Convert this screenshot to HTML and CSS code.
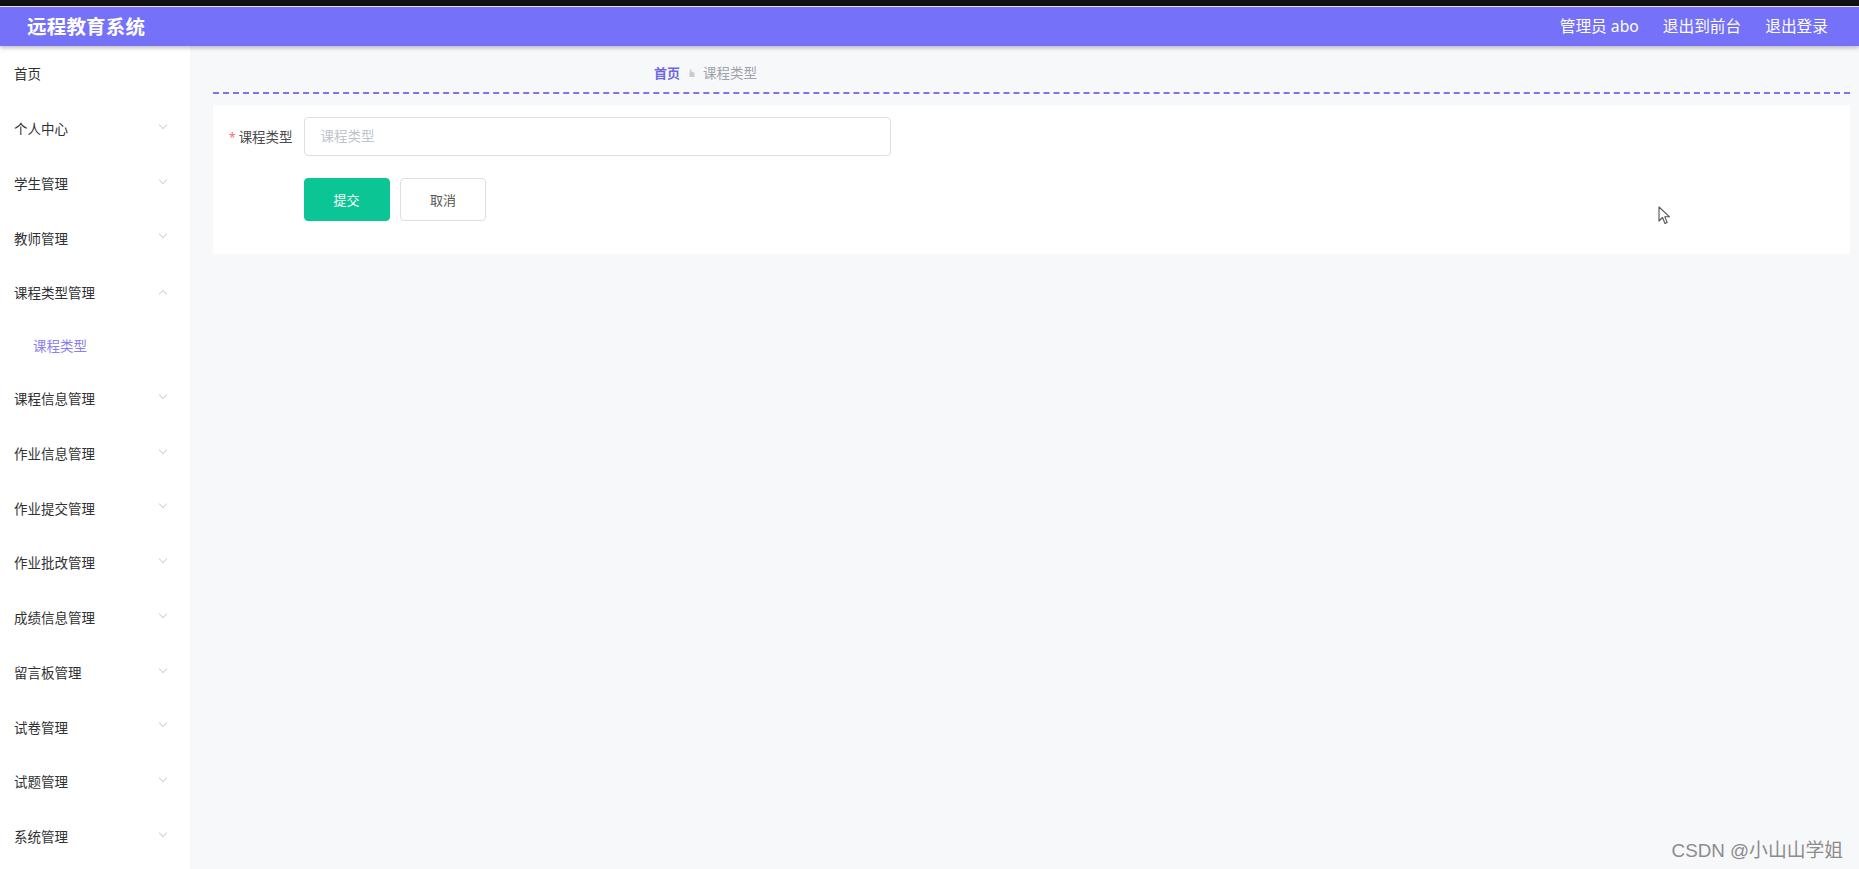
FILE: index.html
```html
<!DOCTYPE html>
<html lang="zh-CN">
<head>
    <meta charset="UTF-8">
    <meta name="viewport" content="width=device-width, initial-scale=1.0">
    <title>远程教育系统</title>
    <link rel="stylesheet" href="styles.css">
</head>
<body>
    <div class="topbar"></div>
    <div class="header">
        <div class="logo">远程教育系统</div>
        <div class="header-right">
            <span>管理员 abo</span>
            <span>退出到前台</span>
            <span>退出登录</span>
        </div>
    </div>

    <div class="layout">
        <div class="sidebar">
            <div class="menu-item">首页</div>
            <div class="menu-item">个人中心<span class="arrow"></span></div>
            <div class="menu-item">学生管理<span class="arrow"></span></div>
            <div class="menu-item">教师管理<span class="arrow"></span></div>
            <div class="menu-item">课程类型管理<span class="arrow up"></span></div>
            <div class="menu-item sub active">课程类型</div>
            <div class="menu-item">课程信息管理<span class="arrow"></span></div>
            <div class="menu-item">作业信息管理<span class="arrow"></span></div>
            <div class="menu-item">作业提交管理<span class="arrow"></span></div>
            <div class="menu-item">作业批改管理<span class="arrow"></span></div>
            <div class="menu-item">成绩信息管理<span class="arrow"></span></div>
            <div class="menu-item">留言板管理<span class="arrow"></span></div>
            <div class="menu-item">试卷管理<span class="arrow"></span></div>
            <div class="menu-item">试题管理<span class="arrow"></span></div>
            <div class="menu-item">系统管理<span class="arrow"></span></div>
        </div>

        <div class="main">
            <div class="breadcrumb">
                <span class="crumb-home">首页</span>
                <svg class="crumb-sep" width="8" height="10" viewBox="0 0 8 10">
                    <path d="M2 1.5 L3.5 1.5 L3.5 4 L6.5 4.5 L6.5 9 L1.5 9 L1.5 5 Z" fill="#c8cad0"/>
                </svg>
                <span class="crumb-current">课程类型</span>
            </div>

            <div class="card">
                <div class="form-item">
                    <label class="form-label"><span class="required">*</span>课程类型</label>
                    <input class="form-input" type="text" placeholder="课程类型">
                </div>
                <div class="form-actions">
                    <button class="btn btn-primary">提交</button>
                    <button class="btn btn-default">取消</button>
                </div>
            </div>
        </div>
    </div>

    <svg class="cursor" width="13" height="20" viewBox="0 0 13 20">
        <path d="M1 1 L1 15 L4.5 11.5 L7 17.5 L9.2 16.6 L6.8 10.8 L11.5 10.8 Z" fill="#fff" stroke="#555" stroke-width="1.1" stroke-linejoin="round"/>
    </svg>

    <div class="watermark">CSDN @小山山学姐</div>
</body>
</html>
```

FILE: styles.css
```css
html, body {
    margin: 0;
    padding: 0;
    height: 100%;
    overflow: hidden;
}
body {
    background-color: #f7f8fa;
    color: #303133;
    font-family: "Noto Sans", "Noto Sans CJK SC", sans-serif;
    position: relative;
}
.topbar {
    height: 6px;
    background-color: #111;
    border-bottom: 1px solid #e8e8ee;
}
.header {
    height: 39px;
    background-color: #7571f9;
    display: flex;
    align-items: center;
    justify-content: space-between;
    padding: 0 31px 0 27px;
    box-shadow: 0 2px 4px rgba(0, 0, 0, 0.25);
    position: relative;
    z-index: 2;
}
.logo {
    color: #fff;
    font-size: 19.5px;
    font-weight: bold;
    line-height: 1;
    letter-spacing: 0.2px;
}
.header-right {
    display: flex;
    gap: 24px;
    color: #fff;
    font-size: 15.7px;
    line-height: 1;
}
.layout {
    display: flex;
    height: calc(100% - 46px);
}
.sidebar {
    width: 190px;
    flex-shrink: 0;
    background-color: #fff;
}
.menu-item {
    height: 54.75px;
    display: flex;
    align-items: center;
    padding-left: 14px;
    font-size: 13.5px;
    color: #303133;
    position: relative;
}
.menu-item.sub {
    height: 51px;
    padding-left: 33px;
}
.menu-item.active {
    color: #8a80f2;
}
.arrow {
    position: absolute;
    left: 160px;
    top: 21px;
    width: 5px;
    height: 5px;
    border-right: 1px solid #d2d3d6;
    border-bottom: 1px solid #d2d3d6;
    transform: rotate(45deg);
}
.arrow.up {
    top: 26px;
    transform: rotate(-135deg);
}
.main {
    flex: 1;
    padding: 0 9px 0 23px;
}
.breadcrumb {
    box-sizing: border-box;
    height: 47.5px;
    display: flex;
    align-items: flex-start;
    padding: 21px 0 0 441px;
    border-bottom: 2px dashed #7c74ee;
    font-size: 13px;
    line-height: 1;
}
.crumb-home {
    color: #6f66e6;
    font-weight: bold;
}
.crumb-sep {
    margin: 1px 7px 0 8px;
}
.crumb-current {
    color: #a0a3ab;
    font-size: 13.5px;
}
.card {
    margin-top: 11px;
    background-color: #fff;
    padding: 12px 16px 33px;
}
.form-item {
    display: flex;
    align-items: center;
}
.form-label {
    font-size: 13.5px;
    color: #4a4c50;
    margin-right: 11px;
    width: 63.5px;
    white-space: nowrap;
}
.required {
    color: #f56c6c;
    margin-right: 3px;
    font-size: 12px;
}
.form-input {
    width: 587px;
    height: 39px;
    box-sizing: border-box;
    border: 1px solid #dcdfe6;
    border-radius: 4px;
    padding: 0 16px;
    font-size: 13.5px;
    font-family: "Noto Sans", "Noto Sans CJK SC", sans-serif;
    color: #606266;
    outline: none;
}
.form-input::placeholder {
    color: #c0c4cc;
}
.form-actions {
    display: flex;
    gap: 10.5px;
    margin-top: 22.5px;
    padding-left: 74.5px;
}
.btn {
    width: 86px;
    height: 43px;
    border-radius: 4px;
    font-size: 13px;
    font-family: "Noto Sans", "Noto Sans CJK SC", sans-serif;
    cursor: pointer;
}
.btn-primary {
    background-color: #0bc594;
    border: 1px solid #0bc594;
    color: #fff;
}
.btn-default {
    background-color: #fff;
    border: 1px solid #dcdfe6;
    color: #555;
}
.cursor {
    position: absolute;
    left: 1658px;
    top: 206px;
}
.watermark {
    position: absolute;
    right: 16px;
    bottom: 6px;
    font-size: 18.8px;
    color: #8c8c8c;
    font-family: "Liberation Sans", "Noto Sans CJK SC", sans-serif;
    line-height: 1.2;
}
```
